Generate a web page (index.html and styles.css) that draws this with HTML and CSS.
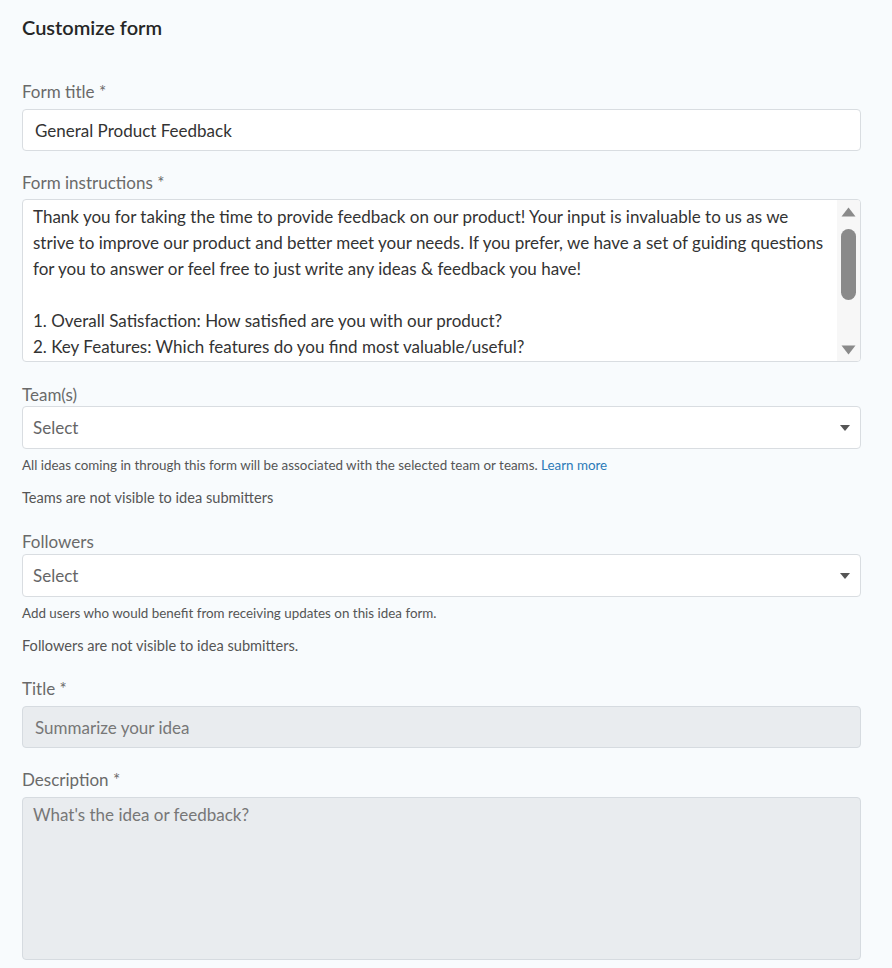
FILE: index.html
```html
<!DOCTYPE html>
<html lang="en">
<head>
<meta charset="utf-8">
<title>Customize form</title>
<link rel="stylesheet" href="styles.css">
</head>
<body>
<main class="page">
  <h1 class="heading">Customize form</h1>

  <div class="field field-first">
    <label class="label">Form title *</label>
    <div class="input">General Product Feedback</div>
  </div>

  <div class="field">
    <label class="label label-tight">Form instructions *</label>
    <div class="textarea">
      <div class="textarea-text">
        <p>Thank you for taking the time to provide feedback on our product! Your input is invaluable to us as we strive to improve our product and better meet your needs. If you prefer, we have a set of guiding questions for you to answer or feel free to just write any ideas &amp; feedback you have!</p>
        <p class="blank">&nbsp;</p>
        <p>1. Overall Satisfaction: How satisfied are you with our product?</p>
        <p>2. Key Features: Which features do you find most valuable/useful?</p>
      </div>
      <div class="scrollbar">
        <svg class="arrow" width="15" height="10" viewBox="0 0 15 10"><path d="M7.5 0.5 L14.5 9.5 L0.5 9.5 Z" fill="#8a8a8a"/></svg>
        <div class="thumb"></div>
        <div class="track"></div>
        <svg class="arrow" width="15" height="10" viewBox="0 0 15 10"><path d="M0.5 0.5 L14.5 0.5 L7.5 9.5 Z" fill="#8a8a8a"/></svg>
      </div>
    </div>
  </div>

  <div class="field field-select">
    <label class="label label-select">Team(s)</label>
    <div class="select">
      <span class="select-text">Select</span>
      <svg class="caret" width="10" height="6" viewBox="0 0 10 6"><path d="M0 0 L10 0 L5 6 Z" fill="#555"/></svg>
    </div>
    <p class="help">All ideas coming in through this form will be associated with the selected team or teams. <a class="link" href="#">Learn more</a></p>
    <p class="note">Teams are not visible to idea submitters</p>
  </div>

  <div class="field field-select2">
    <label class="label label-select2">Followers</label>
    <div class="select">
      <span class="select-text">Select</span>
      <svg class="caret" width="10" height="6" viewBox="0 0 10 6"><path d="M0 0 L10 0 L5 6 Z" fill="#555"/></svg>
    </div>
    <p class="help">Add users who would benefit from receiving updates on this idea form.</p>
    <p class="note">Followers are not visible to idea submitters.</p>
  </div>

  <div class="field field-title">
    <label class="label">Title *</label>
    <div class="input input-disabled">Summarize your idea</div>
  </div>

  <div class="field">
    <label class="label">Description *</label>
    <div class="textarea-disabled">What's the idea or feedback?</div>
  </div>
</main>
</body>
</html>
```

FILE: styles.css
```css
* { box-sizing: border-box; }
html, body { margin: 0; padding: 0; }
body {
  background: #f8fbfd;
  font-family: "Lato", "Noto Sans", sans-serif;
  color: #333;
}
.page {
  padding: 14px 31px 0 22px;
  display: flex;
  flex-direction: column;
}
.heading {
  margin: 0;
  font-size: 20px;
  font-weight: 600;
  color: #262626;
  line-height: 26px;
}
.field { display: flex; flex-direction: column; margin-top: 20px; }
.field-first { margin-top: 40px; }
.field-select { margin-top: 21px; }
.field-select2 { margin-top: 24px; }
.field-title { margin-top: 23px; }
.label {
  font-size: 17px;
  color: #6a6a6a;
  line-height: 24px;
  margin-bottom: 5px;
}
.label-tight { margin-bottom: 4px; }
.label-select { margin-bottom: -1px; }
.label-select2 { margin-bottom: 0; }
.input {
  height: 42px;
  background: #fff;
  border: 1px solid #d9dde1;
  border-radius: 4px;
  padding: 0 12px;
  display: flex;
  align-items: center;
  font-size: 17px;
  color: #333;
}
.input-disabled {
  background: #e9ecef;
  color: #777;
  border-color: #d6dbe0;
}
.textarea {
  height: 163px;
  background: #fff;
  border: 1px solid #d9dde1;
  border-radius: 4px;
  display: flex;
  overflow: hidden;
}
.textarea-text {
  flex: 1;
  padding: 4px 6px 0 10px;
  font-size: 17px;
  line-height: 26px;
  color: #333;
  overflow: hidden;
}
.textarea-text p { margin: 0; }
.scrollbar {
  width: 23px;
  display: flex;
  flex-direction: column;
  align-items: center;
  padding: 7px 0 6px;
  background: #f7f7f7;
}
.arrow { display: block; flex: none; }
.thumb {
  width: 15px;
  height: 71px;
  border-radius: 7.5px;
  background: #8a8a8a;
  margin-top: 12px;
  flex: none;
}
.track { flex: 1; }
.select {
  height: 43px;
  background: #fff;
  border: 1px solid #d9dde1;
  border-radius: 4px;
  padding: 0 10px 0 10px;
  display: flex;
  align-items: center;
  justify-content: space-between;
}
.select-text { font-size: 17px; color: #666; }
.caret { display: block; }
.help {
  margin: 8px 0 0;
  font-size: 13.4px;
  line-height: 16px;
  color: #555;
}
.link { color: #2c7ab8; text-decoration: none; }
.note {
  margin: 17px 0 0;
  font-size: 14.6px;
  line-height: 16px;
  color: #555;
}
.textarea-disabled {
  height: 163px;
  background: #e9ecef;
  border: 1px solid #d6dbe0;
  border-radius: 4px;
  padding: 5px 10px;
  font-size: 17px;
  line-height: 24px;
  color: #777;
}
```
